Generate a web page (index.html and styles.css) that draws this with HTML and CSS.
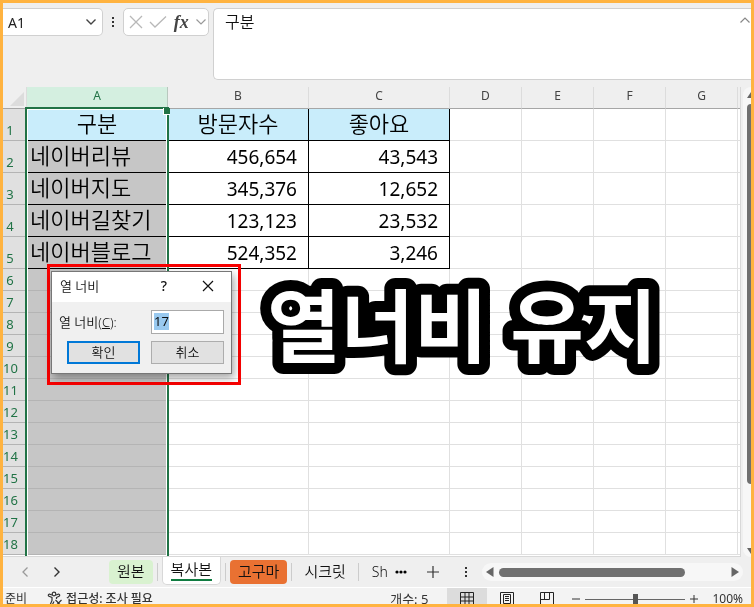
FILE: index.html
```html
<!DOCTYPE html>
<html lang="ko">
<head>
    <meta charset="UTF-8">
    <meta name="viewport" content="width=device-width, initial-scale=1.0">
    <title>열 너비 유지</title>
    <link rel="stylesheet" href="styles.css">
</head>
<body>
    <div id="app">
        <div class="formula-bar">
            <button class="name-box" aria-label="이름 상자">
                <span>A1</span>
                <svg width="12" height="8" viewBox="0 0 12 8"><path d="M1.5 1.5L6 6l4.500-4.500" fill="none" stroke="#444" stroke-width="1.400"/></svg>
            </button>
            <svg class="grip" width="4" height="12" viewBox="0 0 4 12"><path d="M1 0h2v2H1zM1 4h2v2H1zM1 8h2v2H1z" fill="#333"/></svg>
            <div class="fx-box">
                <button aria-label="취소"><svg width="14" height="14" viewBox="0 0 14 14"><path d="M1 1l12 12M13 1L1 13" fill="none" stroke="#b8b8b8" stroke-width="1.300"/></svg></button>
                <button aria-label="입력"><svg width="18" height="14" viewBox="0 0 18 14"><path d="M1 7l5 5L17 1.500" fill="none" stroke="#b8b8b8" stroke-width="1.300"/></svg></button>
                <button class="fx" aria-label="함수 삽입">fx</button>
                <button aria-label="함수 목록"><svg width="12" height="8" viewBox="0 0 12 8"><path d="M1.500 1.500L6 6l4.500-4.500" fill="none" stroke="#999" stroke-width="1.200"/></svg></button>
            </div>
            <div class="formula">
                <textarea aria-label="수식 입력줄">구분</textarea>
                <button aria-label="접기"><svg width="12" height="8" viewBox="0 0 12 8"><path d="M1.500 6.500L6 2l4.500 4.500" fill="none" stroke="#888" stroke-width="1.200"/></svg></button>
            </div>
        </div>

        <div class="workspace">
            <div class="sheet">
                <table>
                    <colgroup>
                        <col class="c-num"><col class="c-wide"><col class="c-wide"><col class="c-wide">
                        <col class="c-std"><col class="c-std"><col class="c-std"><col class="c-std"><col>
                    </colgroup>
                    <thead>
                        <tr>
                            <th class="corner"><svg width="14" height="14" viewBox="0 0 14 14"><path d="M14 0v14H0z" fill="#dcdcdc"/></svg></th>
                            <th class="sel">A</th><th>B</th><th>C</th><th>D</th><th>E</th><th>F</th><th>G</th><th></th>
                        </tr>
                    </thead>
                    <tbody>
                        <tr class="data title"><th>1</th><td>구분</td><td>방문자수</td><td>좋아요</td><td></td><td></td><td></td><td></td><td></td></tr>
                        <tr class="data"><th>2</th><td>네이버리뷰</td><td>456,654</td><td>43,543</td><td></td><td></td><td></td><td></td><td></td></tr>
                        <tr class="data"><th>3</th><td>네이버지도</td><td>345,376</td><td>12,652</td><td></td><td></td><td></td><td></td><td></td></tr>
                        <tr class="data"><th>4</th><td>네이버길찾기</td><td>123,123</td><td>23,532</td><td></td><td></td><td></td><td></td><td></td></tr>
                        <tr class="data"><th>5</th><td>네이버블로그</td><td>524,352</td><td>3,246</td><td></td><td></td><td></td><td></td><td></td></tr>
                        <tr><th>6</th><td></td><td></td><td></td><td></td><td></td><td></td><td></td><td></td></tr>
                        <tr><th>7</th><td></td><td></td><td></td><td></td><td></td><td></td><td></td><td></td></tr>
                        <tr><th>8</th><td></td><td></td><td></td><td></td><td></td><td></td><td></td><td></td></tr>
                        <tr><th>9</th><td></td><td></td><td></td><td></td><td></td><td></td><td></td><td></td></tr>
                        <tr><th>10</th><td></td><td></td><td></td><td></td><td></td><td></td><td></td><td></td></tr>
                        <tr><th>11</th><td></td><td></td><td></td><td></td><td></td><td></td><td></td><td></td></tr>
                        <tr><th>12</th><td></td><td></td><td></td><td></td><td></td><td></td><td></td><td></td></tr>
                        <tr><th>13</th><td></td><td></td><td></td><td></td><td></td><td></td><td></td><td></td></tr>
                        <tr><th>14</th><td></td><td></td><td></td><td></td><td></td><td></td><td></td><td></td></tr>
                        <tr><th>15</th><td></td><td></td><td></td><td></td><td></td><td></td><td></td><td></td></tr>
                        <tr><th>16</th><td></td><td></td><td></td><td></td><td></td><td></td><td></td><td></td></tr>
                        <tr><th>17</th><td></td><td></td><td></td><td></td><td></td><td></td><td></td><td></td></tr>
                        <tr><th>18</th><td></td><td></td><td></td><td></td><td></td><td></td><td></td><td></td></tr>
                    </tbody>
                </table>
                <div class="selection"></div>

                <!-- 열 너비 대화상자 -->
                <div class="highlight">
                    <form class="dialog">
                        <div class="dialog-head">
                            <span>열 너비</span>
                            <button type="button" class="help" aria-label="도움말">?</button>
                            <button type="button" aria-label="닫기"><svg width="12" height="12" viewBox="0 0 12 12"><path d="M1 1l10 10M11 1L1 11" fill="none" stroke="#111" stroke-width="1.200"/></svg></button>
                        </div>
                        <div class="dialog-body">
                            <label for="col-width">열 너비(<u>C</u>):</label>
                            <div class="field"><mark>17</mark><input id="col-width" type="text" value="17"></div>
                            <button type="button" class="ok">확인</button>
                            <button type="button">취소</button>
                        </div>
                    </form>
                </div>

                <svg class="caption" width="420" height="124" viewBox="0 0 420 124"><text x="16" y="92">열너비 유지</text></svg>
            </div>

            <div class="vscroll">
                <svg width="8" height="8" viewBox="0 0 8 8"><path d="M0 7l4-6 4 6z" fill="#666"/></svg>
                <div class="thumb"></div>
                <svg width="8" height="8" viewBox="0 0 8 8"><path d="M0 1l4 6 4-6z" fill="#666"/></svg>
            </div>
        </div>

        <div class="tabs">
            <button class="nav" aria-label="이전"><svg width="8" height="12" viewBox="0 0 8 12"><path d="M6.500 1.500L2 6l4.500 4.500" fill="none" stroke="#999" stroke-width="1.300"/></svg></button>
            <button class="nav" aria-label="다음"><svg width="8" height="12" viewBox="0 0 8 12"><path d="M1.500 1.500L6 6l-4.500 4.500" fill="none" stroke="#333" stroke-width="1.400"/></svg></button>
            <button class="tab green">원본</button>
            <i></i>
            <button class="tab active"><span>복사본</span></button>
            <i></i>
            <button class="tab orange">고구마</button>
            <i></i>
            <button class="tab plain">시크릿</button>
            <i></i>
            <button class="tab cut">Sh</button>
            <button class="more" aria-label="더 보기"><svg width="12" height="4" viewBox="0 0 12 4"><circle cx="2" cy="2" r="1.600"/><circle cx="6" cy="2" r="1.600"/><circle cx="10" cy="2" r="1.600"/></svg></button>
            <button class="add" aria-label="새 시트"><svg width="12" height="12" viewBox="0 0 12 12"><path d="M6 0v12M0 6h12" stroke="#333" stroke-width="1.200"/></svg></button>
            <svg class="dots" width="4" height="12" viewBox="0 0 4 12"><path d="M1 1h2v2H1zM1 5h2v2H1zM1 9h2v2H1z" fill="#333"/></svg>
            <div class="hscroll">
                <svg width="8" height="10" viewBox="0 0 8 10"><path d="M7.500 0v10L0 5z" fill="#666"/></svg>
                <div class="track"><div class="thumb"></div></div>
                <svg width="8" height="10" viewBox="0 0 8 10"><path d="M.5 0v10L8 5z" fill="#666"/></svg>
            </div>
        </div>

        <div class="status">
            <span>준비</span>
            <svg class="access" width="16" height="16" viewBox="0 0 16 16" fill="none" stroke="#333" stroke-width="1.200"><circle cx="7" cy="3" r="1.800"/><path d="M5 4L2.500 3.200C1 3 1 4.800 2 5.200L5 6.500v3L3.500 13c-.4 1.400 1.400 1.800 1.900.6L7 10.500M9 4l2.500-.8c1.500-.2 1.500 1.600.5 2L9.500 6.500V8M8.500 9l6 6M14.500 9l-6 6"/></svg>
            <b>접근성: 조사 필요</b>
            <span class="count">개수: 5</span>
            <button class="view on" aria-label="기본"><svg width="14" height="14" viewBox="0 0 14 14"><path d="M.5.5h13v13H.5zM5 0v14M9 0v14M0 5h14M0 9h14" fill="none" stroke="#222"/></svg></button>
            <button class="view" aria-label="페이지 레이아웃"><svg width="14" height="14" viewBox="0 0 14 14"><path d="M.5.5h13v13H.5zM3.500 2.500h7v9h-7zM5 4.500h4M5 6.500h4M5 8.500h4" fill="none" stroke="#222"/></svg></button>
            <button class="view" aria-label="페이지 나누기"><svg width="14" height="14" viewBox="0 0 14 14"><path d="M.5 14V.5h13V14M4.500.5v7M9.500.5v7M.5 7.500h9" fill="none" stroke="#222"/></svg></button>
            <div class="zoom">
                <svg width="8" height="8" viewBox="0 0 8 8"><path d="M0 4h8" stroke="#333"/></svg>
                <input type="range" min="0" max="100" value="50" aria-label="확대/축소">
                <svg width="8" height="8" viewBox="0 0 8 8"><path d="M0 4h8M4 0v8" stroke="#333"/></svg>
            </div>
            <span class="percent">100%</span>
        </div>
    </div>
</body>
</html>
```
FILE: styles.css
```css
*{padding: 0;margin: 0;box-sizing: border-box;}
body{font: 13px "Noto Sans","Noto Sans CJK KR",sans-serif;color: #222;}
button{background: none;border: 0;font: inherit;color: inherit;}
svg{display: block;flex: none;}
#app{height: 100vh;border: 3px solid #ffb340;background: #efefef;overflow: hidden;display: flex;flex-direction: column;}

/* 수식 입력줄 */
.formula-bar{display: flex;align-items: flex-start;padding: 5px 0 7px;flex: none;}
.name-box{width: 100px;height: 28px;display: flex;align-items: center;justify-content: space-between;padding: 0 5px;background: #fff;border: 1px solid #d0d0d0;border-left: 0;border-radius: 0 5px 5px 0;font-size: 14px;}
.grip{margin: 9px 8px 0;}
.fx-box{width: 86px;height: 28px;display: flex;align-items: center;justify-content: space-between;padding: 0 1px 0 5px;background: #fff;border: 1px solid #d0d0d0;border-radius: 5px;}
.fx{font: italic bold 18px/20px "Liberation Serif",serif;color: #444;}
.formula{flex: 1;height: 72px;margin-left: 4px;display: flex;align-items: flex-start;background: #fff;border: 1px solid #d0d0d0;border-right: 0;border-radius: 5px 0 0 5px;}
.formula textarea{flex: 1;height: 68px;padding: 2px 11px;border: 0;outline: 0;resize: none;background: none;font: 350 16px/20px "Noto Sans CJK KR",sans-serif;color: #111;}
.formula button{padding-top: 7px;}

/* 시트 */
.workspace{display: flex;flex: none;}
.sheet{flex: 1;position: relative;background: #fff;border-right: 1px solid #d8d8d8;border-bottom: 1px solid #d8d8d8;padding-bottom: 1px;}
table{width: 100%;table-layout: fixed;border-collapse: separate;border-spacing: 0;}
.c-num{width: 24px;}
.c-wide{width: 141px;}
.c-std{width: 72px;}
thead th{height: 22px;font-weight: 400;font-size: 12px;line-height: 16px;padding-bottom: 3px;color: #444;background: #efefef;border-right: 1px solid #dcdcdc;border-bottom: 1px solid #a6a6a6;}
thead th:last-child{border-right: 0;}
thead .sel{background: #d4efe0;color: #217346;border-right-color: #b8c8be;}
thead .corner{padding: 3px 0 0;}
thead .corner svg{margin-left: 7px;}
tbody th{height: 22px;font-weight: 400;font-size: 13px;line-height: 16px;color: #217346;background: #e0e0e0;border-bottom: 1px solid #b4b4b4;vertical-align: bottom;padding: 0 10px 2px 0;}
td{border-right: 1px solid #e0e0e0;border-bottom: 1px solid #e0e0e0;}
td:last-child{border-right: 0;}
td:nth-child(2){background: #c6c6c6;border-bottom-color: #b4b4b4;}
.data th,.data td{height: 32px;}
.data td:nth-child(-n+4){border-color: #000;color: #000;font-size: 19px;line-height: 24px;text-align: right;padding-right: 11px;}
.data td:nth-child(2),.title td:nth-child(-n+4){font-family: "Noto Sans CJK KR",sans-serif;font-weight: 350;font-size: 22px;}
.data td:nth-child(2){text-align: left;padding: 0 0 5px 3px;}
.title td:nth-child(-n+4){background: #c9edfb;text-align: center;padding: 0 0 5px;}
.selection{position: absolute;left: 22px;top: 20px;bottom: 0;width: 144px;border: 2px solid #217346;border-bottom: 0;box-shadow: inset 1px 1px #fff,inset -1px 0 #fff;}
.selection::after{content: "";position: absolute;right: -3px;top: -1px;width: 6px;height: 6px;background: #217346;border: solid #fff;border-width: 0 0 1px 1px;}

/* 대화상자 */
.highlight{position: absolute;left: 44px;top: 177px;width: 194px;border: 3px solid #f80000;padding: 4px 6px 8px 1px;}
.dialog{background: #f0f0f0;border: 1px solid #777;box-shadow: 2px 4px 8px rgba(0,0,0,.35);font: 13px/16px "Noto Sans","Noto Sans CJK KR",sans-serif;font-weight: 350;color: #111;}
.dialog-head{display: flex;align-items: center;height: 30px;padding: 0 17px 2px 8px;background: #fff;}
.dialog-head .help{margin: 0 35px 0 auto;font-size: 14px;font-weight: 500;}
.dialog-body{display: grid;grid-template-columns: 73px 73px;gap: 7px 11px;justify-content: end;align-items: center;padding: 8px 7px 9px;}
.dialog-body label{margin-left: -8px;white-space: nowrap;}
.field{position: relative;}
.field input{width: 100%;height: 24px;display: block;padding: 0 2px 2px;border: 1px solid #aaa;background: #fff;font: 13px "Noto Sans",sans-serif;color: #111;}
.field mark{position: absolute;left: 3px;top: 3px;height: 17px;background: #99c9ef;color: transparent;font: 13px/17px "Noto Sans",sans-serif;mix-blend-mode: multiply;}
.dialog-body button{height: 23px;padding-bottom: 1px;background: #e1e1e1;border: 1px solid #adadad;}
.dialog-body .ok{border: 2px solid #0078d7;}
.caption{position: absolute;left: 248px;top: 177px;}
.caption text{font: 700 80px "Noto Sans CJK KR",sans-serif;fill: #fff;stroke: #000;stroke-width: 22px;stroke-linejoin: round;paint-order: stroke;}

/* 스크롤 막대 */
.vscroll{width: 8px;margin-left: 2px;display: flex;flex-direction: column;align-items: flex-end;padding: 4px 0 2px;background: #f7f7f7;border-radius: 8px 0 0 8px;overflow: hidden;}
.vscroll svg{margin-right: -4px;}
.vscroll .thumb{width: 4px;height: 380px;margin: 5px 0 auto;background: #707070;border-radius: 4px 0 0 4px;}

/* 시트 탭 */
.tabs{display: flex;align-items: center;height: 31px;flex: none;border-bottom: 1px solid #fff;font: 15px/20px "Noto Sans","Noto Sans CJK KR",sans-serif;font-weight: 350;}
.tabs i{width: 1px;height: 18px;background: #ccc;}
.nav{width: 32px;padding-left: 18px;}
.tab{height: 24px;border-radius: 4px;padding: 0 8px 2px;white-space: nowrap;color: #111;}
.green{background: #d9f2d0;margin: 0 4px 0 42px;}
.active{align-self: flex-start;height: 28px;margin: 0 4px;background: #fff;border: 1px solid #d8d8d8;border-top: 0;border-radius: 0 0 5px 5px;}
.active span{display: block;border-bottom: 2px solid #107c41;}
.orange{background: #e97132;margin: 0 4px;}
.plain{padding: 0 12px 2px;}
.cut{width: 28px;padding: 0 0 0 13px;overflow: hidden;font-size: 14px;}
.more{margin-left: 8px;}
.add{margin-left: 20px;}
.dots{margin-left: 25px;}
.hscroll{flex: 1;height: 18px;display: flex;align-items: center;margin: 0 8px 0 14px;padding: 0 4px;background: #f7f7f7;border-radius: 9px;}
.track{flex: 1;padding: 0 46px 0 5px;}
.track .thumb{height: 9px;background: #707070;border-radius: 5px;}

/* 상태 표시줄 */
.status{display: flex;align-items: center;height: 22px;flex: none;padding: 0 8px 0 2px;background: #f3f3f3;font: 12px/20px "Noto Sans","Noto Sans CJK KR",sans-serif;color: #333;white-space: nowrap;}
.access{margin: 0 3px 0 20px;}
.status b{font-weight: 500;}
.count{margin-left: auto;font-size: 13px;}
.view{width: 40px;height: 22px;display: flex;justify-content: center;align-items: center;}
.on{background: #dcdcdc;margin-left: 19px;}
.zoom{display: flex;align-items: center;gap: 5px;margin: 0 14px 0 5px;}
.zoom input{appearance: none;width: 100px;height: 10px;background: linear-gradient(#666,#666) center/100% 1px no-repeat;}
.zoom input::-webkit-slider-thumb{appearance: none;width: 5px;height: 10px;background: #555;}
```
